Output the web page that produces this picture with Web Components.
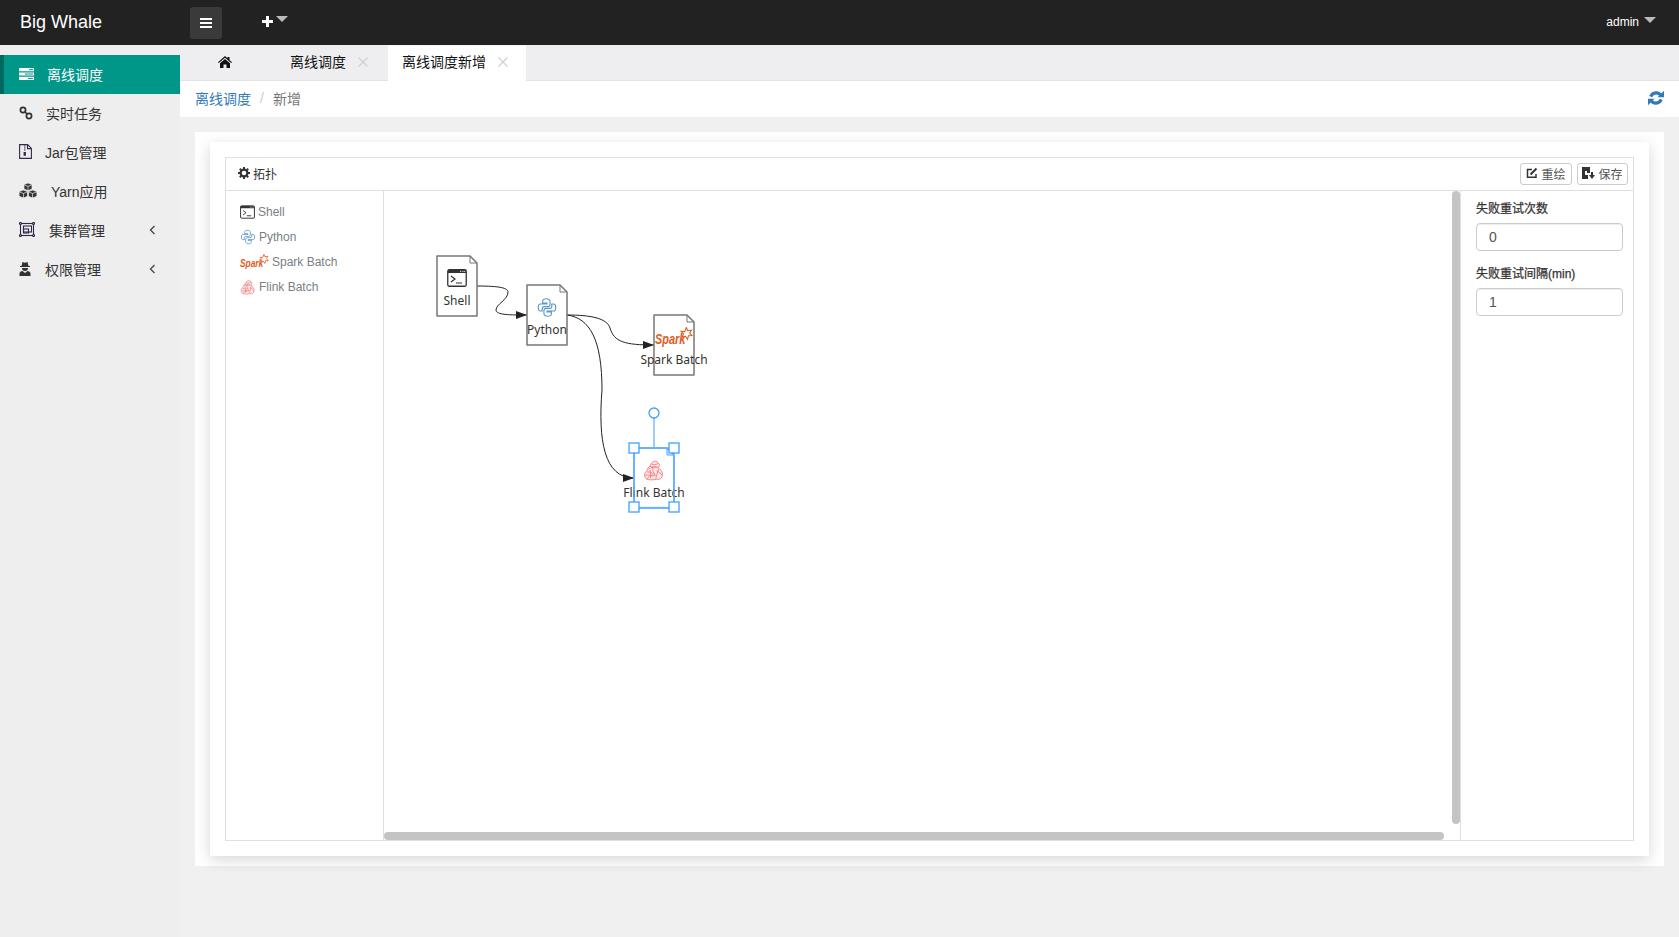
<!DOCTYPE html>
<html lang="zh">
<head>
<meta charset="utf-8">
<title>Big Whale</title>
<style>
html,body{margin:0;height:100%;overflow:hidden;background:#f0f0f0}
body{font:14px "Liberation Sans","Noto Sans CJK SC",sans-serif;color:#333}
</style>
</head>
<body>
<bw-app></bw-app>
<script>
// icons shared by the palette and the diagram nodes
const ICONS = {
    shell: `<svg viewBox="0 0 20 18" width="W" height="H"><rect x=".75" y=".75" width="18.5" height="16.5" rx="1.5" fill="#fff" stroke="#333" stroke-width="1.3"/><path d="M1 1h18v3H1z" fill="#333"/><path d="M13 2.400h1.200M15.300 2.400h1.200M17.200 2.400h1" stroke="#fff" stroke-width=".9"/><path d="M4 7l4 3-4 3M9 14h6" fill="none" stroke="#333" stroke-width="1.200"/></svg>`,
    python: `<svg viewBox="0 0 24 24" width="W" height="H"><g fill="#fff" stroke="#5e97c9" stroke-width="1.300"><path d="M11 2C8.500 2 7 3 7 5V7h5V8H4.500C3 8 2 9.500 2 12s1 4 2.500 4h2V13.500C6.500 12 7.500 11 9 11h4c1.500 0 2.500-1 2.500-2.500V5C15.500 3 13.500 2 11 2z"/><path transform="rotate(180 12 12)" d="M11 2C8.500 2 7 3 7 5V7h5V8H4.500C3 8 2 9.500 2 12s1 4 2.500 4h2V13.500C6.500 12 7.500 11 9 11h4c1.500 0 2.500-1 2.500-2.500V5C15.500 3 13.500 2 11 2z"/></g></svg>`,
    spark: `<svg viewBox="0 0 40 22" width="W" height="H"><text x="0" y="17.500" font-family="Liberation Sans" font-size="14.500" font-weight="700" font-style="italic" fill="#e25a1c" textLength="32" lengthAdjust="spacingAndGlyphs">Spark</text><path d="M33 .5l1.300 3.300 4.200-.6-2 3 2.500 2.800-3.800.2-1 3.800-2-3.300-3.700.8 1.500-3.300-2.500-2.700 3.800.3z" fill="#fff" stroke="#e25a1c" stroke-width="1.100"/></svg>`,
    flink: `<svg viewBox="0 0 24 24" width="W" height="H"><g fill="#fde6e6" stroke="#ec6f76" stroke-width=".85"><path d="M4 22C1 20 1 15 4 13c1-4 4-5 5-8 2-3.500 7-3.500 8 0 2 1 1 4-1 4 3 2 6 5 5 9 0 3-3 5-6 4-4 1-8 1-11 0z"/><path d="M9 5c2 2 5 1 8 0M7 8c3 1 6 0 9 1M6 11c3-2 6-2 9-2M4 14c4 0 7 1 9 4M2.500 18c3-1 6-1 8 1M11 9c-1 3 0 6 3 9M15 13c2 1 5 3 6 5M17 11c-1 3-2 6-3 10M4 22c2-3 5-5 9-4M8 12c0 3 1 6 0 9"/></g></svg>`
}
const icon = (n, w, h) => ICONS[n].replace('width="W"', `width="${w}"`).replace('height="H"', `height="${h}"`)

const NAV_ICONS = {
    server: `<svg width="15" height="12" viewBox="0 0 15 12"><path d="M0 0h15v3.200H0zM0 4.400h15v3.200H0zM0 8.800h15V12H0z" fill="#fff"/><path d="M10 1.600h4M6 6h8M9 10.400h5" stroke="#009688"/></svg>`,
    link: `<svg width="14" height="14" viewBox="0 0 14 14" fill="none" stroke="#333" stroke-width="1.700"><circle cx="4" cy="4" r="2.600"/><circle cx="10" cy="10" r="2.600"/><path d="M5.500 5.500l3 3"/></svg>`,
    zip: `<svg width="13" height="15" viewBox="0 0 13 15" fill="none" stroke="#35294a" stroke-width="1.100"><path d="M.6.600h8l3.800 3.800v10H.6zM8.500.600v4h4"/><path d="M5 2h1.500M5 4h1.500M5 6h1.500" stroke-width="1"/><rect x="4.600" y="8" width="2.300" height="3.800" fill="#35294a" stroke="none"/></svg>`,
    cubes: `<svg width="18" height="15" viewBox="0 0 18 15" fill="#333" stroke="#eee" stroke-width=".7"><path d="M9 0l4 1.600v4.500L9 7.700 5 6.100V1.600z"/><path d="M5.500 2L9 3.400 12.500 2M9 3.400v4" fill="none"/><path d="M4.500 7l4 1.600v4.700l-4 1.600-4.400-1.600V8.600z"/><path d="M.5 9l4 1.500 3.500-1.500M4.500 10.500V15" fill="none"/><path d="M13.500 7l4.400 1.600v4.700L13.500 15l-4-1.700V8.600z"/><path d="M10 9l3.500 1.500 4-1.500M13.500 10.500V15" fill="none"/></svg>`,
    frame: `<svg width="16" height="15" viewBox="0 0 16 15" fill="none" stroke="#33264a" stroke-width="1.100"><rect x="1.500" y="1.500" width="13" height="12"/><rect x="4.500" y="4" width="8" height="6"/><rect x="4.500" y="7" width="5" height="4"/><g fill="#eee"><circle cx="1.500" cy="1.500" r="1"/><circle cx="14.500" cy="1.500" r="1"/><circle cx="1.500" cy="13.500" r="1"/><circle cx="14.500" cy="13.500" r="1"/></g></svg>`,
    secret: `<svg width="12" height="14" viewBox="0 0 12 14" fill="#333"><path d="M3.500 0L6 .7 8.500 0l1 4h1.500v1H1V4h1.500zM3 6h6C9 8 8 9 6 9S3 8 3 6zM.500 14v-2.500C.500 10 2 9 3.500 9L6 11l2.500-2c1.500 0 3 1 3 2.500V14z"/></svg>`
}

class BwHeader extends HTMLElement {
    connectedCallback() {
        this.attachShadow({ mode: 'open' }).innerHTML = `<style>
        :host{display:flex;align-items:center;height:45px;background:#222;color:#fff;flex:none}
        .logo{width:180px;box-sizing:border-box;padding:0 0 1px 20px;font-size:18px}
        .toggle{display:flex;align-items:center;justify-content:center;width:32px;height:32px;margin-left:10px;margin-top:1px;background:#3a3a3a;border-radius:3px}
        .add{display:flex;align-items:center;margin-left:40px;margin-top:-3px}
        .caret{width:0;height:0;border:6px solid transparent;border-top:6px solid #bbb;border-bottom:0;margin-left:3px;margin-top:-4px}
        .user{margin-left:auto;margin-right:23px;display:flex;align-items:center;font-size:12px;margin-top:-2px}
        </style>
        <div class="logo">Big Whale</div>
        <div class="toggle"><svg width="12" height="10" viewBox="0 0 12 10" fill="#fff"><path d="M0 0h12v2H0zM0 4h12v2H0zM0 8h12v2H0z"/></svg></div>
        <div class="add"><svg width="11" height="11" viewBox="0 0 11 11" fill="#fff"><path d="M4 0h3v4h4v3H7v4H4V7H0V4h4z"/></svg><span class="caret"></span></div>
        <div class="user">admin<span class="caret" style="margin-left:5px"></span></div>`
    }
}

class BwNavItem extends HTMLElement {
    connectedCallback() {
        let gap = this.getAttribute('gap') || 14
        this.attachShadow({ mode: 'open' }).innerHTML = `<style>
        :host{display:flex;align-items:center;height:39px;box-sizing:border-box;padding:0 24px 2px 19px;color:#333;font-size:14px}
        :host([active]){background:#009688;color:#fff;box-shadow:inset 4px 0 0 #00695f}
        .ic{display:flex;align-items:center;margin-right:${gap}px}
        .chev{margin-left:auto}
        </style>
        <span class="ic">${NAV_ICONS[this.getAttribute('icon')]}</span><slot></slot>
        ${this.hasAttribute('sub') ? `<svg class="chev" width="7" height="10" viewBox="0 0 7 10" fill="none" stroke="#444" stroke-width="1.300"><path d="M5.500 1L1.500 5l4 4"/></svg>` : ''}`
    }
}

class BwSidebar extends HTMLElement {
    connectedCallback() {
        this.attachShadow({ mode: 'open' }).innerHTML = `<style>
        :host{display:block;width:180px;flex:none;background:#eee;padding-top:10px;box-sizing:border-box}
        </style><slot></slot>`
    }
}

class BwTab extends HTMLElement {
    connectedCallback() {
        this.attachShadow({ mode: 'open' }).innerHTML = `<style>
        :host{display:flex;align-items:center;height:36px;box-sizing:border-box;padding:0 17px 4px 14px;color:#111;font-size:14px;margin-right:2px}
        :host([active]){background:#fff;border-top:1px solid #f4f4f4;padding-bottom:5px}
        svg{margin-left:11px;margin-top:1px}
        </style><slot></slot>
        <svg width="12" height="12" viewBox="0 0 12 12" stroke="#cfcfcf" stroke-width="1.200"><path d="M1.500 1.500l9 9M10.500 1.500l-9 9"/></svg>`
    }
}

class BwTabs extends HTMLElement {
    connectedCallback() {
        this.attachShadow({ mode: 'open' }).innerHTML = `<style>
        :host{display:flex;height:36px;background:#eeeef0;box-shadow:inset 0 -1px 0 #e4e4e4;flex:none}
        .home{width:90px;margin-right:6px;display:flex;align-items:center;justify-content:center;padding-bottom:3px}
        </style>
        <div class="home"><svg width="14" height="12" viewBox="0 0 14 12" fill="#111"><path d="M7 0l2.500 2.200V1h2v3l2.500 2.300-.8.800L7 1.800 .8 7.100 0 6.300zM2 7.300L7 3l5 4.300V12H8.500V8.500h-3V12H2z"/></svg></div>
        <slot></slot>`
    }
}

class BwBreadcrumb extends HTMLElement {
    connectedCallback() {
        this.attachShadow({ mode: 'open' }).innerHTML = `<style>
        :host{display:flex;align-items:center;height:36px;box-sizing:border-box;background:#fff;padding:0 15px 2px;font-size:14px;color:#777;flex:none}
        a{color:#337ab7}
        i{font-style:normal;color:#ccc;padding:0 9px}
        svg{margin-left:auto;margin-top:-1px}
        </style>
        <a>离线调度</a><i>/</i><span>新增</span>
        <svg width="16" height="16" viewBox="0 0 16 16" fill="#337ab7"><path d="M13.200 5.800A5.800 5.800 0 0 0 2.800 6.600" fill="none" stroke="#337ab7" stroke-width="3.200"/><path d="M9.500 7.200H16V.7z"/><path d="M2.800 10.200A5.800 5.800 0 0 0 13.200 9.400" fill="none" stroke="#337ab7" stroke-width="3.200"/><path d="M6.500 8.800H0v6.500z"/></svg>`
    }
}

class BwPalette extends HTMLElement {
    connectedCallback() {
        let row = (n, w, h, t) => `<div class="row"><span class="ic">${icon(n, w, h)}</span>${t}</div>`
        this.attachShadow({ mode: 'open' }).innerHTML = `<style>
        :host{display:block;width:143px;flex:none;border-right:1px solid #e0e0e0;padding:8px 0 0 14px;box-sizing:content-box;font-size:12px;color:#7a7f85}
        .row{display:flex;align-items:center;height:25px}
        .ic{display:flex;margin-right:3px}
        </style>
        ${row('shell', 15, 14, 'Shell')}
        ${row('python', 16, 16, 'Python')}
        ${row('spark', 29, 16, 'Spark Batch')}
        ${row('flink', 16, 16, 'Flink Batch')}`
    }
}

// free canvas, the viewBox starts at the canvas' place on the page so node coords stay readable
class BwCanvas extends HTMLElement {
    connectedCallback() {
        let node = (x, y, label, ic, iw, ih, ix, iy, sel) => `
        <path d="M${x} ${y}h33l7 7v53h-40z" fill="#fff" stroke="${sel ? '#3fa0ff' : '#777'}" stroke-width="1.500" stroke-linejoin="round"/>
        <path d="M${x + 33} ${y}v7h7" fill="none" stroke="${sel ? '#3fa0ff' : '#777'}"/>
        <svg x="${ix}" y="${iy}" width="${iw}" height="${ih}">${icon(ic, iw, ih)}</svg>
        <text x="${x + 20}" y="${y + 49}" text-anchor="middle" font-family="Noto Sans" font-size="12" fill="#333">${label}</text>`
        let handle = (x, y) => `<rect x="${x - 5}" y="${y - 5}" width="10" height="10" fill="#fff" stroke="#3fa0ff" stroke-width="1.300"/>`
        this.attachShadow({ mode: 'open' }).innerHTML = `<style>
        :host{display:block;position:relative;flex:1;min-width:0;overflow:hidden}
        svg.main{display:block}
        .sb{position:absolute;background:#c4c4c4;border-radius:4px}
        .v{right:0;top:0;width:8px;height:633px}
        .h{left:0;bottom:0;height:8px;width:1060px}
        </style>
        <svg class="main" width="1076" height="649" viewBox="384 191 1076 649">
        <defs><marker id="arr" markerWidth="11" markerHeight="8" refX="11" refY="4" orient="auto" markerUnits="userSpaceOnUse"><path d="M0 0L11 4 0 8z" fill="#222"/></marker></defs>
        <g fill="none" stroke="#222" stroke-width="1">
          <path marker-end="url(#arr)" d="M477 286C500 286 508 288 508 292C508 300 496 304 496 310C496 315 510 315 527 315"/>
          <path marker-end="url(#arr)" d="M567 315C590 315 607 318 610 328C614 342 625 345 654 345"/>
          <path marker-end="url(#arr)" d="M567 315C590 318 602 340 602 390C598 440 604 478 634 478"/>
        </g>
        ${node(437, 256, 'Shell', 'shell', 20, 18, 447, 269)}
        ${node(527, 285, 'Python', 'python', 21, 21, 536.500, 297)}
        ${node(654, 315, 'Spark Batch', 'spark', 38, 21, 655, 327)}
        ${node(634, 448, 'Flink Batch', 'flink', 22, 22, 643, 459, true)}
        <g fill="none" stroke="#66b3ff" stroke-width="1.300">
          <rect x="634" y="448" width="40" height="59.500"/>
          <path d="M654 418v30"/>
        </g>
        <circle cx="654" cy="413" r="5" fill="#fff" stroke="#3fa0ff" stroke-width="1.300"/>
        ${handle(634, 448)}${handle(674, 448)}${handle(634, 507)}${handle(674, 507)}
        </svg>
        <div class="sb v"></div><div class="sb h"></div>`
    }
}

class BwField extends HTMLElement {
    connectedCallback() {
        this.attachShadow({ mode: 'open' }).innerHTML = `<style>
        :host{display:block;margin-bottom:15px}
        label{display:block;font-size:12px;color:#333;-webkit-text-stroke:.25px #333;line-height:17px;margin-bottom:5px}
        .input{box-sizing:border-box;width:147px;height:28px;border:1px solid #ccc;border-radius:4px;padding:0 12px;font-size:14px;line-height:26px;color:#555;box-shadow:inset 0 1px 1px rgba(0,0,0,.075)}
        </style>
        <label>${this.getAttribute('label')}</label><div class="input">${this.getAttribute('value')}</div>`
    }
}

class BwPanel extends HTMLElement {
    connectedCallback() {
        this.attachShadow({ mode: 'open' }).innerHTML = `<style>
        :host{display:flex;flex-direction:column;height:100%;box-sizing:border-box;border:1px solid #e0e0e0;background:#fff}
        .head{display:flex;align-items:center;height:33px;box-sizing:border-box;flex:none;border-bottom:1px solid #e0e0e0;padding:0 5px 2px 12px;font-size:12px;color:#333}
        .head svg.gear{margin-right:3px}
        .btn{display:flex;align-items:center;justify-content:center;width:52px;height:22px;box-sizing:border-box;border:1px solid #ccc;border-radius:3px;color:#555;margin:2px 0 0 5px;padding-bottom:2px}
        .btn svg{margin-right:3px}
        .btn.s{width:51px}
        .sp{margin-left:auto}
        .body{display:flex;flex:1;min-height:0}
        .props{flex:none;border-left:1px solid #e0e0e0;padding:10px 0 0 15px;width:157px}
        </style>
        <div class="head">
          <svg class="gear" width="12" height="12" viewBox="0 0 12 12"><circle cx="6" cy="6" r="3.400" fill="none" stroke="#333" stroke-width="2.200"/><path d="M6 0v2M6 10v2M0 6h2M10 6h2M1.800 1.800l1.400 1.400M8.800 8.800l1.400 1.400M1.800 10.200l1.400-1.400M8.800 3.200l1.400-1.400" stroke="#333" stroke-width="2"/></svg>拓扑
          <span class="sp"></span>
          <div class="btn"><svg width="12" height="12" viewBox="0 0 12 12" fill="none" stroke="#333" stroke-width="1.500"><path d="M10 7v3.200H1.500V2.500H6"/><path d="M4.500 7.500L10.500 1.500" stroke-width="2"/></svg>重绘</div>
          <div class="btn s"><svg width="13" height="12" viewBox="0 0 13 12" fill="#333"><path d="M0 0h8v6H5V4H3v4h3v4H0zM9 5h2v3h2l-3 4-3-4h2z"/></svg>保存</div>
        </div>
        <div class="body"><bw-palette></bw-palette><bw-canvas></bw-canvas><div class="props"><slot></slot></div></div>`
    }
}

class BwApp extends HTMLElement {
    connectedCallback() {
        this.attachShadow({ mode: 'open' }).innerHTML = `<style>
        :host{display:flex;flex-direction:column;height:937px;width:1679px}
        .row{display:flex;flex:1;min-height:0}
        main{flex:1;min-width:0;display:flex;flex-direction:column}
        .content{padding:15px;flex:1;min-height:0}
        .box{background:#fff;padding:10px 15px;height:734px;box-sizing:border-box}
        .card{background:#fff;padding:15px;height:100%;box-sizing:border-box;box-shadow:0 4px 14px rgba(0,0,0,.16)}
        </style>
        <bw-header></bw-header>
        <div class="row">
          <bw-sidebar>
            <bw-nav-item icon="server" active gap="13">离线调度</bw-nav-item>
            <bw-nav-item icon="link" gap="13">实时任务</bw-nav-item>
            <bw-nav-item icon="zip" gap="13">Jar包管理</bw-nav-item>
            <bw-nav-item icon="cubes" gap="14">Yarn应用</bw-nav-item>
            <bw-nav-item icon="frame" sub gap="14">集群管理</bw-nav-item>
            <bw-nav-item icon="secret" sub gap="14">权限管理</bw-nav-item>
          </bw-sidebar>
          <main>
            <bw-tabs><bw-tab>离线调度</bw-tab><bw-tab active>离线调度新增</bw-tab></bw-tabs>
            <bw-breadcrumb></bw-breadcrumb>
            <div class="content"><div class="box"><div class="card">
              <bw-panel>
                <bw-field label="失败重试次数" value="0"></bw-field>
                <bw-field label="失败重试间隔(min)" value="1"></bw-field>
              </bw-panel>
            </div></div></div>
          </main>
        </div>`
    }
}

customElements.define('bw-header', BwHeader)
customElements.define('bw-nav-item', BwNavItem)
customElements.define('bw-sidebar', BwSidebar)
customElements.define('bw-tab', BwTab)
customElements.define('bw-tabs', BwTabs)
customElements.define('bw-breadcrumb', BwBreadcrumb)
customElements.define('bw-palette', BwPalette)
customElements.define('bw-canvas', BwCanvas)
customElements.define('bw-field', BwField)
customElements.define('bw-panel', BwPanel)
customElements.define('bw-app', BwApp)
</script>
</body>
</html>
